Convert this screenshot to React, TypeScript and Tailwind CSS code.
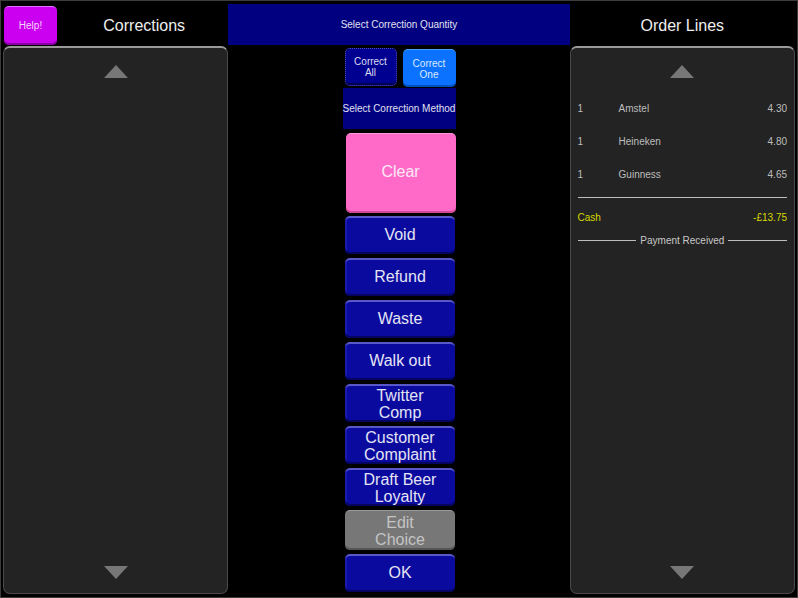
import React from "react";

const font = { fontFamily: '"Liberation Sans", Arial, sans-serif' };

const methods = [
  ["Void"],
  ["Refund"],
  ["Waste"],
  ["Walk out"],
  ["Twitter", "Comp"],
  ["Customer", "Complaint"],
  ["Draft Beer", "Loyalty"],
];

const orderLines = [
  { qty: "1", name: "Amstel", price: "4.30" },
  { qty: "1", name: "Heineken", price: "4.80" },
  { qty: "1", name: "Guinness", price: "4.65" },
];

function UpArrow() {
  return (
    <svg width="24" height="13" viewBox="0 0 24 13">
      <polygon points="12,0 24,13 0,13" fill="#777777" />
    </svg>
  );
}

function DownArrow() {
  return (
    <svg width="24" height="13" viewBox="0 0 24 13">
      <polygon points="0,0 24,0 12,13" fill="#777777" />
    </svg>
  );
}

function MethodButton({ lines }: { lines: string[] }) {
  return (
    <button
      className={
        "flex h-[38px] w-[110px] flex-col items-center justify-center rounded-[5px] border-t-2 border-[#5858c8] bg-[#0a0a9e] text-[16px] leading-[17px] text-[#e4e4f4] shadow-[inset_0_-2px_0_#050560,inset_2px_0_0_#1a1ab0] " +
        (lines.length === 1 ? "pb-[3px]" : "")
      }
    >
      {lines.map((l) => (
        <span key={l}>{l}</span>
      ))}
    </button>
  );
}

export default function App() {
  return (
    <div
      className="flex h-[598px] w-[798px] border border-[#3c3c3c] bg-black pl-[2px] pr-[2px] pb-[3px]"
      style={font}
    >
      {/* left column */}
      <div className="flex w-[226px] flex-col">
        <div className="flex h-[45px] items-center pt-[3px]">
          <button className="ml-[1px] flex h-[39px] w-[53px] items-center justify-center rounded-[5px] border-t border-[#e070ff] bg-[#cc00f0] text-[10px] text-[#f4d8ff] shadow-[inset_0_-2px_0_#8a00a8]">
            Help!
          </button>
          <div className="flex-1 pt-[2px] pl-[3px] text-center text-[16px] text-[#eeeeee]">
            Corrections
          </div>
        </div>
        <div className="flex flex-1 flex-col items-center justify-between rounded-[7px] border border-[#4a4a4a] border-t-2 border-t-[#9a9a9a] bg-[#232323] pt-[17px] pb-[14px]">
          <UpArrow />
          <DownArrow />
        </div>
      </div>

      {/* centre column */}
      <div className="flex w-[342px] flex-col items-center">
        <div className="mt-[3px] flex h-[41px] w-full items-center justify-center bg-[#000080] text-[10px] text-[#e0e0f0]">
          Select Correction Quantity
        </div>
        <div className="mt-[3px] flex w-[113px] justify-between pl-[2px]">
          <button className="flex h-[38px] w-[52px] flex-col items-center justify-center rounded-[5px] border border-dotted border-[#5050b0] bg-[#000090] text-[10px] leading-[11px] text-[#dcdcf0] shadow-[inset_0_-2px_0_#000050]">
            <span>Correct</span>
            <span>All</span>
          </button>
          <button className="mt-[1px] flex h-[38px] w-[53px] flex-col items-center justify-center rounded-[5px] border-t border-[#4aa0ff] bg-[#0a72ff] text-[10px] leading-[11px] text-[#dceaff] shadow-[inset_0_-2px_0_#0050c0]">
            <span>Correct</span>
            <span>One</span>
          </button>
        </div>
        <div className="mt-[1px] flex h-[41px] w-[113px] items-center justify-center bg-[#000080] text-[10px] text-[#e0e0f0]">
          Select Correction Method
        </div>
        <button className="mt-[4px] ml-[3px] flex h-[80px] w-[110px] items-center justify-center rounded-[5px] border-t border-[#ff9ad8] bg-[#ff6ac8] pb-[4px] text-[16px] text-[#fde8f6] shadow-[inset_0_-2px_0_#d04898]">
          Clear
        </button>
        <div className="mt-[3px] ml-[2px] flex flex-col gap-[4px]">
          {methods.map((m) => (
            <MethodButton key={m[0]} lines={m} />
          ))}
          <button className="flex h-[40px] w-[110px] flex-col items-center justify-center rounded-[5px] border-t border-[#9a9a9a] bg-[#777777] text-[16px] leading-[17px] text-[#c4c4c4] shadow-[inset_0_-2px_0_#555555]">
            <span>Edit</span>
            <span>Choice</span>
          </button>
          <MethodButton lines={["OK"]} />
        </div>
      </div>

      {/* right column */}
      <div className="flex w-[226px] flex-col">
        <div className="flex h-[45px] items-center justify-center pt-[5px] text-[16px] text-[#eeeeee]">
          Order Lines
        </div>
        <div className="flex flex-1 flex-col rounded-[7px] border border-[#4a4a4a] border-t-2 border-t-[#9a9a9a] bg-[#232323] px-[7px] pt-[17px] pb-[14px]">
          <div className="flex justify-center">
            <UpArrow />
          </div>
          <div className="mt-[14px] flex flex-col text-[10px] text-[#bdbdbd]">
            {orderLines.map((l) => (
              <div key={l.name} className="flex h-[33px] items-center">
                <span className="w-[41px]">{l.qty}</span>
                <span className="flex-1">{l.name}</span>
                <span>{l.price}</span>
              </div>
            ))}
          </div>
          <div className="mt-[6px] h-[1px] bg-[#bdbdbd]" />
          <div className="mt-[12px] flex text-[10px] text-[#d8d800]">
            <span className="flex-1">Cash</span>
            <span>-£13.75</span>
          </div>
          <div className="mt-[8px] flex items-center gap-[4px] text-[10px] text-[#c8c8c8]">
            <div className="h-[1px] flex-1 bg-[#bdbdbd]" />
            <span>Payment Received</span>
            <div className="h-[1px] flex-1 bg-[#bdbdbd]" />
          </div>
          <div className="flex-1" />
          <div className="flex justify-center">
            <DownArrow />
          </div>
        </div>
      </div>
    </div>
  );
}
